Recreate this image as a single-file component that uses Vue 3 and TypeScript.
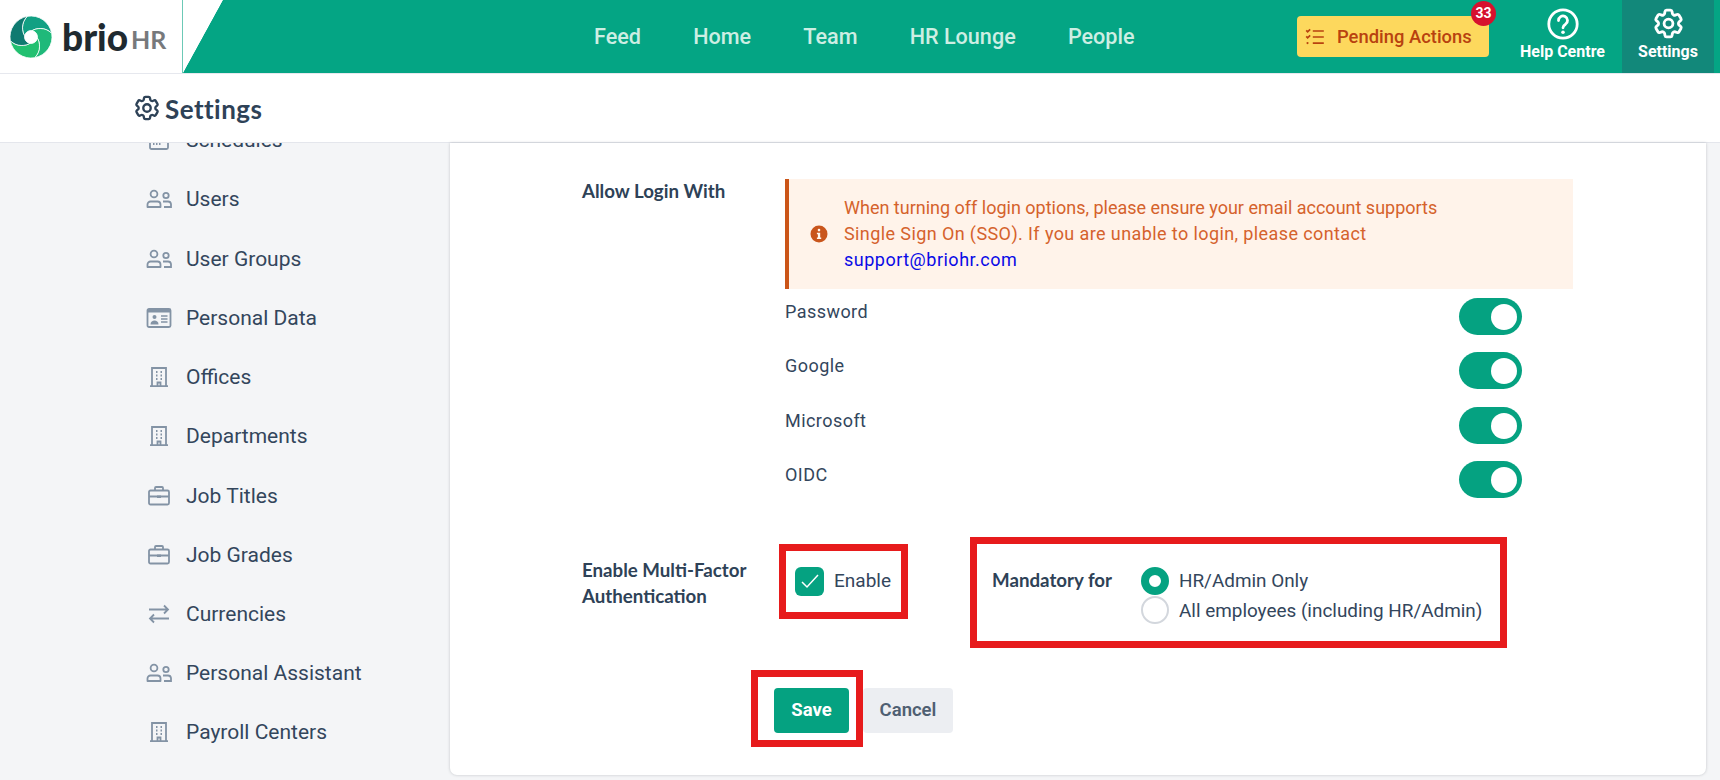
<template>
  <div class="page">
    <header class="topbar">
      <div class="brand">
        <svg class="brand__mark" viewBox="0 0 44 44" width="44" height="44">
          <path v-for="blade in blades" :key="blade.angle" :d="bladePath" :fill="blade.color" stroke="#fff" stroke-width="0.8" :transform="`rotate(${blade.angle} 22 22)`" />
        </svg>
        <span class="brand__name">brio</span><span class="brand__hr">HR</span>
      </div>
      <div class="slant"></div>
      <nav class="topnav">
        <a v-for="item in navItems" :key="item">{{ item }}</a>
      </nav>
      <div class="actions">
        <button class="pending">
          <svg viewBox="0 0 20 20" width="22" height="22" fill="none" stroke="#b8420f" stroke-width="1.5">
            <path d="M8 4.5h10M8 10h10M8 15.5h10M2 4l1.3 1.3L5.6 3M2 9.5l1.3 1.3L5.6 8.5" />
            <circle cx="3.2" cy="15.5" r="1" fill="#b8420f" stroke="none" />
          </svg>
          <span>Pending Actions</span>
          <b class="pending__badge">33</b>
        </button>
        <a class="tool tool--help">
          <svg viewBox="0 0 32 32" width="32" height="32" fill="none" stroke="#fff" stroke-width="2.8">
            <circle cx="16" cy="16" r="14.2" />
            <path d="M11.5 12.5a4.5 4.5 0 1 1 7 3.7c-1.6 1-2.5 1.8-2.5 3.6" stroke-linecap="round" />
            <circle cx="16" cy="24.2" r="1.8" fill="#fff" stroke="none" />
          </svg>
          <span>Help Centre</span>
        </a>
        <a class="tool tool--active">
          <svg viewBox="1.5 1.5 21 21" width="31" height="31" fill="none" stroke="#fff" stroke-width="1.9" stroke-linejoin="round">
            <path :d="gearPath" />
            <circle cx="12" cy="12" r="3" />
          </svg>
          <span>Settings</span>
        </a>
      </div>
    </header>

    <div class="subbar">
      <svg viewBox="1.5 1.5 21 21" width="26" height="26" fill="none" stroke="#2e4257" stroke-width="1.9" stroke-linejoin="round">
        <path :d="gearPath" />
        <circle cx="12" cy="12" r="3" />
      </svg>
      <h1>Settings</h1>
    </div>

    <div class="body">
      <aside class="sidebar">
        <ul>
          <li v-for="item in sideItems" :key="item.label">
            <svg class="side-icon" viewBox="0 0 26 24" width="26" height="24" fill="none" stroke="#8393a5" stroke-width="1.8">
              <template v-if="item.icon === 'users'">
                <circle cx="8" cy="7" r="3.4" />
                <path d="M1.5 20v-2.5a3 3 0 0 1 3-3h7a3 3 0 0 1 3 3V20Z" stroke-linejoin="round" />
                <circle cx="20" cy="8.5" r="2.7" />
                <path d="M17 14.5h5a3 3 0 0 1 3 2.6V20h-7" />
              </template>
              <template v-else-if="item.icon === 'card'">
                <rect x="1.5" y="3" width="23" height="18" rx="1.5" />
                <path d="M2 5h22" stroke-width="3" />
                <circle cx="8.5" cy="11" r="2" fill="#8393a5" stroke="none" />
                <path d="M4.5 18.5c0-3 2-4 4-4s4 1 4 4Z" fill="#8393a5" stroke="none" />
                <path d="M15 10h6.5M15 13h6.5M15 16h6.5" stroke-width="1.4" />
              </template>
              <template v-else-if="item.icon === 'office'">
                <path d="M6 21V3h14v18M4 21.2h18" />
                <path d="M10 7h1.5M14.5 7H16M10 10.5h1.5M14.5 10.5H16M10 14h1.5M14.5 14H16" stroke-width="2" />
                <path d="M11.5 21v-3.5h3V21" />
              </template>
              <template v-else-if="item.icon === 'case'">
                <rect x="3" y="6.5" width="20" height="14" rx="1.5" />
                <path d="M9 6.5V4a1 1 0 0 1 1-1h6a1 1 0 0 1 1 1v2.5M3 12.5h20" />
                <rect x="11" y="11.5" width="4" height="2.5" fill="#8393a5" stroke="none" />
              </template>
              <template v-else-if="item.icon === 'swap'">
                <path d="M3 7.5h19M18 3.5l4 4-4 4M23 16.5H4M8 12.5l-4 4 4 4" />
              </template>
              <template v-else>
                <rect x="4" y="4" width="18" height="17" rx="1.5" />
                <path d="M7 16h9" stroke-dasharray="1.5 1.5" />
              </template>
            </svg>
            <span>{{ item.label }}</span>
          </li>
        </ul>
      </aside>

      <main class="content">
        <section class="card">
          <div class="row row--login">
            <div class="row__label">Allow Login With</div>
            <div class="row__main">
              <div class="notice">
                <svg class="notice__icon" viewBox="0 0 18 18" width="18" height="18">
                  <circle cx="9" cy="9" r="8.5" fill="#c9551c" />
                  <rect x="7.7" y="3.8" width="2.6" height="2.6" rx="1.3" fill="#fff6ee" />
                  <path d="M6.9 7.7h3.3v4.8h1v1.6H6.9v-1.6h1v-3.2h-1Z" fill="#fff6ee" />
                </svg>
                <p>
                  <span>When turning off login options, please ensure your email account supports</span>
                  <span class="notice__wide">Single Sign On (SSO). If you are unable to login, please contact</span>
                  <a>support@briohr.com</a>
                </p>
              </div>
              <div v-for="opt in loginOptions" :key="opt" class="option">
                <span>{{ opt }}</span>
                <i class="switch"></i>
              </div>
            </div>
          </div>

          <div class="row row--mfa">
            <div class="row__label">Enable Multi-Factor Authentication</div>
            <div class="mark mark--enable">
              <span class="check">
                <svg viewBox="0 0 29 29" width="29" height="29" fill="none" stroke="#fff" stroke-width="1.5">
                  <path d="M7 15l5 5L23 8" />
                </svg>
              </span>
              <span>Enable</span>
            </div>
            <div class="mark mark--mandatory">
              <strong>Mandatory for</strong>
              <div class="radios">
                <label class="radio"><i class="dot dot--on"></i>HR/Admin Only</label>
                <label class="radio"><i class="dot"></i>All employees (including HR/Admin)</label>
              </div>
            </div>
          </div>

          <div class="buttons">
            <div class="mark mark--save"><button class="btn btn--save">Save</button></div>
            <button class="btn btn--cancel">Cancel</button>
          </div>
        </section>
      </main>
    </div>
  </div>
</template>

<script setup lang="ts">
  type SideIcon = "cal" | "users" | "card" | "office" | "case" | "swap"

  // one swirl blade, rotated four times for the logo
  const bladePath =
    "M15.6 20.87C13.2 17 11.5 8 18.35 1.32A21 21 0 0 1 42.68 18.35C36 11.5 27 13.2 23.13 15.6A6.5 6.5 0 0 0 15.6 20.87Z"

  const blades = [
    { angle: 0, color: "#12a083" },
    { angle: 90, color: "#1fb97a" },
    { angle: 180, color: "#22c070" },
    { angle: 270, color: "#0f7a70" },
  ]

  const gearPath =
    "M9.594 3.94c.09-.542.56-.94 1.11-.94h2.593c.55 0 1.02.398 1.11.94l.213 1.281c.063.374.313.686.645.87.074.04.147.083.22.127.325.196.72.257 1.075.124l1.217-.456a1.125 1.125 0 0 1 1.37.49l1.296 2.247a1.125 1.125 0 0 1-.26 1.431l-1.003.827c-.293.241-.438.613-.43.992a7.723 7.723 0 0 1 0 .255c-.008.378.137.75.43.991l1.004.827c.424.35.534.955.26 1.43l-1.298 2.247a1.125 1.125 0 0 1-1.369.491l-1.217-.456c-.355-.133-.75-.072-1.076.124a6.47 6.47 0 0 1-.22.128c-.331.183-.581.495-.644.869l-.213 1.281c-.09.543-.56.94-1.11.94h-2.594c-.55 0-1.019-.398-1.11-.94l-.213-1.281c-.062-.374-.312-.686-.644-.87a6.52 6.52 0 0 1-.22-.127c-.325-.196-.72-.257-1.076-.124l-1.217.456a1.125 1.125 0 0 1-1.369-.49l-1.297-2.247a1.125 1.125 0 0 1 .26-1.431l1.004-.827c.292-.24.437-.613.43-.991a6.932 6.932 0 0 1 0-.255c.007-.38-.138-.751-.43-.992l-1.004-.827a1.125 1.125 0 0 1-.26-1.43l1.297-2.247a1.125 1.125 0 0 1 1.37-.491l1.216.456c.356.133.751.072 1.076-.124.072-.044.146-.086.22-.128.332-.183.582-.495.644-.869l.214-1.28Z"

  const navItems = ["Feed", "Home", "Team", "HR Lounge", "People"]

  const sideItems: { label: string; icon: SideIcon }[] = [
    { label: "Schedules", icon: "cal" },
    { label: "Users", icon: "users" },
    { label: "User Groups", icon: "users" },
    { label: "Personal Data", icon: "card" },
    { label: "Offices", icon: "office" },
    { label: "Departments", icon: "office" },
    { label: "Job Titles", icon: "case" },
    { label: "Job Grades", icon: "case" },
    { label: "Currencies", icon: "swap" },
    { label: "Personal Assistant", icon: "users" },
    { label: "Payroll Centers", icon: "office" },
  ]

  const loginOptions = ["Password", "Google", "Microsoft", "OIDC"]
</script>

<style>
  html,
  body {
    margin: 0;
    background: #f4f5f7;
    overflow: hidden;
  }
</style>

<style scoped>
  .page {
    width: 1720px;
    height: 780px;
    display: flex;
    flex-direction: column;
    overflow: hidden;
    font-family: Roboto, "Liberation Sans", sans-serif;
    color: #33465c;
    background: #f4f5f7;
  }

  .topbar {
    flex: none;
    height: 74px;
    box-sizing: border-box;
    display: flex;
    background: #04a584;
    border-bottom: 1px solid #e6e8ee;
  }

  .brand {
    flex: none;
    width: 183px;
    box-sizing: border-box;
    padding-left: 9px;
    display: flex;
    align-items: center;
    background: #fff;
    border-right: 1px solid #6cc9b6;
  }

  .brand__mark {
    flex: none;
    margin-right: 9px;
  }

  .brand__name {
    font: 900 37px/1 Lato, sans-serif;
    color: #1f2a30;
  }

  .brand__hr {
    margin-left: 3px;
    margin-top: 5px;
    font: 700 25px/1 Lato, sans-serif;
    color: #77797c;
  }

  .slant {
    flex: none;
    width: 40px;
    background: linear-gradient(to bottom right, #fff 49.5%, #04a584 50.5%);
  }

  .topnav {
    flex: none;
    margin-left: 371px;
    display: flex;
    align-items: center;
    gap: 52.2px;
    font-size: 21.6px;
    font-weight: 500;
    color: #cdeee3;
  }

  .actions {
    flex: none;
    margin-left: auto;
    margin-right: 6px;
    display: flex;
    align-items: stretch;
  }

  .pending {
    position: relative;
    align-self: center;
    width: 192px;
    height: 41px;
    margin-right: 14px;
    padding: 0 0 0 7px;
    display: flex;
    align-items: center;
    gap: 11px;
    border: 0;
    border-radius: 4px;
    background: #fdd85d;
    color: #b8420f;
    font: 500 18.4px Roboto, sans-serif;
  }

  .pending__badge {
    position: absolute;
    top: -15px;
    right: -7px;
    width: 25px;
    height: 25px;
    border-radius: 50%;
    background: #d6112e;
    color: #fff;
    font-size: 14px;
    line-height: 25px;
    text-align: center;
  }

  .tool {
    display: flex;
    flex-direction: column;
    align-items: center;
    justify-content: flex-start;
    padding-top: 8px;
    gap: 2px;
    color: #fff;
    font-size: 16px;
    font-weight: 700;
  }

  .tool--help {
    width: 119px;
  }

  .tool--active {
    width: 92px;
    gap: 3px;
    background: #12887a;
  }

  .subbar {
    flex: none;
    height: 69px;
    box-sizing: border-box;
    padding-left: 134px;
    display: flex;
    align-items: center;
    gap: 5px;
    background: #fff;
    border-bottom: 1px solid #e4e6ec;
  }

  .subbar h1 {
    margin: 2px 0 0;
    font: 700 26px Lato, sans-serif;
    letter-spacing: 0.45px;
    color: #2e4257;
  }

  .body {
    flex: 1;
    min-height: 0;
    display: flex;
  }

  .sidebar {
    flex: none;
    width: 450px;
    overflow: hidden;
  }

  .sidebar ul {
    list-style: none;
    margin: -32.5px 0 0;
    padding: 0 0 0 146px;
  }

  .sidebar li {
    height: 59.24px;
    display: flex;
    align-items: center;
    gap: 14px;
    font-size: 21px;
  }

  .side-icon {
    flex: none;
  }

  .content {
    flex: 1;
    min-width: 0;
  }

  .card {
    width: 1256px;
    height: 632px;
    box-sizing: border-box;
    padding: 36px 0 0 132px;
    background: #fff;
    border-radius: 0 0 7px 7px;
    box-shadow: 0 0 3px rgba(40, 50, 60, 0.25);
  }

  .row {
    display: flex;
    font-size: 18px;
  }

  .row__label {
    flex: none;
    width: 203px;
    margin-top: -1px;
    font: 700 18.7px/26px Lato, sans-serif;
    color: #2e4257;
  }

  .row__main {
    flex: none;
    width: 788px;
  }

  .notice {
    height: 110px;
    box-sizing: border-box;
    margin-bottom: 9px;
    padding-left: 21px;
    display: flex;
    align-items: center;
    gap: 16px;
    background: #fff3ea;
    border-left: 4px solid #cb5518;
  }

  .notice__icon {
    flex: none;
  }

  .notice p {
    margin: 0;
    color: #d5622c;
    line-height: 26.3px;
  }

  .notice p > * {
    display: block;
  }

  .notice__wide {
    letter-spacing: 0.4px;
  }

  .notice a {
    color: #0a0ae6;
    letter-spacing: 0.5px;
  }

  .option {
    height: 54.3px;
    padding-right: 51px;
    display: flex;
    justify-content: space-between;
    line-height: 22px;
    letter-spacing: 0.45px;
  }

  .option span {
    padding-top: 3px;
  }

  .switch {
    position: relative;
    width: 63px;
    height: 37px;
    border-radius: 19px;
    background: #05a281;
  }

  .switch::after {
    content: "";
    position: absolute;
    top: 6px;
    right: 5px;
    width: 26px;
    height: 26px;
    border-radius: 50%;
    background: #fff;
  }

  .row--mfa {
    margin-top: 21.8px;
    align-items: flex-start;
  }

  .row--mfa .row__label {
    width: 197px;
    margin-top: 20px;
  }

  .mark {
    position: relative;
    box-sizing: border-box;
    border: 7px solid #e71b1c;
  }

  .mark--enable {
    flex: none;
    width: 129px;
    height: 75px;
    margin-top: 7px;
    padding: 16px 0 0 9px;
    display: flex;
    align-items: flex-start;
    gap: 10px;
    font-size: 19px;
    line-height: 27px;
  }

  .check {
    width: 29px;
    height: 29px;
    border-radius: 6px;
    background: #05a281;
  }

  .mark--mandatory {
    flex: none;
    width: 537px;
    height: 111px;
    margin-left: 62px;
    padding: 22px 0 0 15px;
    display: flex;
    font-size: 18.9px;
  }

  .mark--mandatory strong {
    flex: none;
    width: 149px;
    font: 700 18.7px/28px Lato, sans-serif;
    color: #2e4257;
  }

  .radios {
    display: flex;
    flex-direction: column;
  }

  .radio {
    height: 29.5px;
    display: flex;
    align-items: center;
    gap: 10px;
  }

  .dot {
    width: 28px;
    height: 28px;
    box-sizing: border-box;
    border: 2px solid #d3d7dd;
    border-radius: 50%;
  }

  .dot--on {
    border: 8px solid #05a281;
  }

  .buttons {
    margin: 22px 0 0 169px;
    display: flex;
    align-items: flex-start;
  }

  .mark--save {
    width: 112px;
    height: 77px;
    padding: 11px 0 0 16px;
  }

  .btn {
    height: 45px;
    border: 0;
    border-radius: 4px;
    font: 700 18.5px Roboto, sans-serif;
  }

  .btn--save {
    width: 75px;
    background: #05a281;
    color: #fff;
  }

  .btn--cancel {
    width: 90px;
    margin-top: 18px;
    background: #eceef2;
    color: #4f5f72;
    font-weight: 600;
  }
</style>
